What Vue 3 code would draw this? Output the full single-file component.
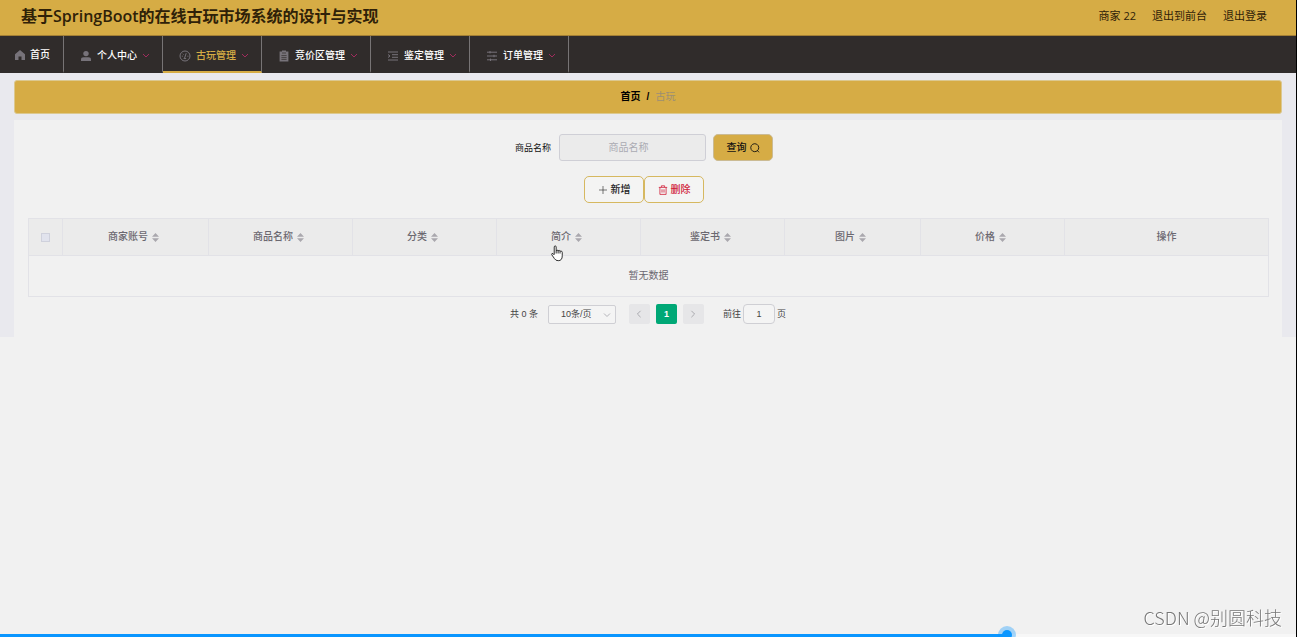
<script setup>
import { ref } from 'vue'

const menu = [
  { label: '首页', icon: 'home', children: false },
  { label: '个人中心', icon: 'user', children: true },
  { label: '古玩管理', icon: 'gauge', children: true, active: true },
  { label: '竞价区管理', icon: 'clipboard', children: true },
  { label: '鉴定管理', icon: 'list', children: true },
  { label: '订单管理', icon: 'sliders', children: true }
]

const columns = [
  { label: '商家账号', size: 'wide' },
  { label: '商品名称', size: 'normal' },
  { label: '分类', size: 'normal' },
  { label: '简介', size: 'normal', pointer: true },
  { label: '鉴定书', size: 'normal' },
  { label: '图片', size: 'narrow' },
  { label: '价格', size: 'normal' }
]

const keyword = ref('')
const pageSize = ref('10')
const jump = ref('1')
const progress = ref(779)
</script>

<template>
  <div class="page">
    <header class="topbar">
      <h1>基于SpringBoot的在线古玩市场系统的设计与实现</h1>
      <div class="account">
        <span>商家 22</span>
        <a href="#">退出到前台</a>
        <a href="#">退出登录</a>
      </div>
    </header>

    <nav class="menu">
      <a v-for="m in menu" :key="m.label" href="#" :class="{ active: m.active, root: !m.children }">
        <svg class="icon" viewBox="0 0 12 12" aria-hidden="true">
          <path v-if="m.icon === 'home'" fill="currentColor" d="M6 1 L11 5.2 V11 H7.5 V7.6 H4.5 V11 H1 V5.2 Z" />
          <g v-else-if="m.icon === 'user'" fill="currentColor">
            <circle cx="6" cy="3.6" r="2.7" />
            <path d="M1 11 V9.6 Q1 7.2 3.6 7.2 H8.4 Q11 7.2 11 9.6 V11 Z" />
          </g>
          <g v-else-if="m.icon === 'gauge'" fill="none" stroke="currentColor">
            <circle cx="6" cy="6" r="5" />
            <path d="M5.6 8 L7.2 3.2 M2.8 6.2 H3.8 M8.4 6.2 H9.4 M3.8 3.8 L4.5 4.5 M4.6 8.6 H7.2" />
          </g>
          <g v-else-if="m.icon === 'clipboard'">
            <path fill="currentColor" d="M1.6 1.6 H4 V.6 H8 V1.6 H10.4 V11.4 H1.6 Z" />
            <path class="cut" d="M4 3 H8 M3.4 5.6 H8.6 M3.4 7.6 H8.6 M3.4 9.4 H8.6" />
          </g>
          <path v-else-if="m.icon === 'list'" fill="none" stroke="currentColor" d="M1 2 H11 M5 4.7 H11 M5 7.3 H11 M1 10 H11 M1 4.5 L3 6 L1 7.5" />
          <path v-else fill="none" stroke="currentColor" d="M1 2.2 H11 M1 6 H11 M1 9.8 H11 M4 1 V3.4 M8 4.8 V7.2 M4.5 8.6 V11" />
        </svg>
        <span>{{ m.label }}</span>
        <svg v-if="m.children" class="arrow" viewBox="0 0 8 8" aria-hidden="true">
          <path fill="none" stroke="currentColor" d="M1 2 L4 5 L7 2" />
        </svg>
      </a>
    </nav>

    <main>
      <div class="crumbs">
        <a href="#">首页</a>
        <span class="slash">/</span>
        <span class="here">古玩</span>
      </div>

      <section class="card">
        <form class="search" @submit.prevent>
          <label for="goods">商品名称</label>
          <input id="goods" v-model="keyword" type="text" placeholder="商品名称">
          <button type="submit" class="query">
            查询
            <svg viewBox="0 0 10 10" aria-hidden="true">
              <path fill="none" stroke="currentColor" stroke-width=".9" d="M4.7 8.7 A4 4 0 1 1 4.8 8.7 Z M7.4 7.6 L9 9.3" />
            </svg>
          </button>
        </form>

        <div class="actions">
          <button type="button">
            <svg viewBox="0 0 10 10" aria-hidden="true"><path fill="none" stroke="currentColor" stroke-width=".6" d="M5 1 V9 M1 5 H9" /></svg>
            新增
          </button>
          <button type="button" class="danger">
            <svg viewBox="0 0 10 10" aria-hidden="true"><path fill="none" stroke="currentColor" stroke-width=".8" d="M.8 2.4 H9.2 M3.4 2.2 V.8 H6.6 V2.2 M1.9 2.4 V9.4 H8.1 V2.4 M4 4.3 V7.6 M6 4.3 V7.6" /></svg>
            删除
          </button>
        </div>

        <table>
          <colgroup>
            <col class="check">
            <col v-for="c in columns" :key="c.label" :class="c.size">
            <col class="last">
          </colgroup>
          <thead>
            <tr>
              <th><input type="checkbox" aria-label="全选"></th>
              <th v-for="c in columns" :key="c.label">
                <span class="sortable">
                  {{ c.label }}
                  <svg viewBox="0 0 7 9" aria-hidden="true"><path fill="currentColor" d="M3.5 0 L7 3.7 H0 Z M0 5.3 H7 L3.5 9 Z" /></svg>
                </span>
                <svg v-if="c.pointer" class="hand" viewBox="0 0 13 18" aria-hidden="true">
                  <path fill="#fff" stroke="#222" stroke-linejoin="round" d="M3.5 10 V2 Q3.5 .8 4.6 .8 Q5.6 .8 5.6 2 V6 Q6.6 4.7 7.7 6 Q8.9 5 9.8 6.4 Q11.8 5.7 12.2 7.7 V11.5 Q12.2 16.8 7.8 16.8 Q5 16.8 3.7 14.5 L.8 10.3 Q.6 8.6 2.1 9 L3.5 10.6 M5.6 6 V9 M7.7 6 V9 M9.8 6.4 V9" />
                </svg>
              </th>
              <th>操作</th>
            </tr>
          </thead>
          <tbody>
            <tr><td colspan="9">暂无数据</td></tr>
          </tbody>
        </table>

        <div class="pager">
          <span>共 0 条</span>
          <div class="size">
            <select v-model="pageSize" aria-label="每页条数">
              <option value="10">10条/页</option>
              <option value="20">20条/页</option>
            </select>
            <svg viewBox="0 0 8 8" aria-hidden="true"><path fill="none" stroke="currentColor" d="M1 2.5 L4 5.5 L7 2.5" /></svg>
          </div>
          <div class="pages">
            <button type="button" aria-label="上一页" disabled>
              <svg viewBox="0 0 8 8" aria-hidden="true"><path fill="none" stroke="currentColor" d="M5.6 .8 L2.4 4 L5.6 7.2" /></svg>
            </button>
            <button type="button" class="current">1</button>
            <button type="button" aria-label="下一页" disabled>
              <svg viewBox="0 0 8 8" aria-hidden="true"><path fill="none" stroke="currentColor" d="M2.4 .8 L5.6 4 L2.4 7.2" /></svg>
            </button>
          </div>
          <label class="jump">前往 <input v-model="jump" type="text"> 页</label>
        </div>
      </section>
    </main>

    <div class="watermark">CSDN @别圆科技</div>
    <input
      v-model="progress"
      class="seek"
      type="range"
      min="0"
      max="1000"
      aria-label="播放进度"
      :style="{ '--played': progress / 10 + '%' }"
    >
  </div>
</template>

<style>
body {
  margin: 0;
  background: #f1f1f1;
}
</style>

<style scoped>
* {
  box-sizing: border-box;
}

.page {
  min-height: 100vh;
  border-right: 1px solid #000;
  background: #f1f1f1;
  color: #222;
  font: 10px/14px "Liberation Sans", "Noto Sans CJK SC", sans-serif;
}

a {
  color: inherit;
  text-decoration: none;
}

button,
input,
select {
  margin: 0;
  font: inherit;
  color: inherit;
}

.topbar {
  display: flex;
  align-items: center;
  justify-content: space-between;
  height: 36px;
  padding: 0 29px 4px 21px;
  border-bottom: 1px solid #a37f35;
  background: #d6ac45;
}

h1 {
  margin: 0;
  color: #2f2108;
  font: 600 16px/24px "Open Sans", "Noto Sans CJK SC", sans-serif;
}

.account {
  display: flex;
  gap: 16px;
  color: #2f2108;
  font: 11px/16px "Open Sans", "Noto Sans CJK SC", sans-serif;
}

.menu {
  display: flex;
  height: 37px;
  background: #302c2b;
  color: #fff;
}

.menu a {
  display: flex;
  align-items: center;
  padding: 4px 12px 0 16px;
  border-right: 1px solid #777475;
  border-bottom: 2px solid transparent;
  font-weight: 500;
}

.menu a.root {
  padding: 2px 13px 0 14px;
}

.menu a.active {
  border-bottom-color: #d6ac45;
  color: #d6ac45;
}

.menu .icon {
  width: 12px;
  height: 12px;
  margin-right: 5px;
  color: #77737a;
}

.menu .root .icon {
  margin-right: 4px;
}

.menu .cut {
  fill: none;
  stroke: #302c2b;
  stroke-width: .7;
}

.menu .arrow {
  width: 8px;
  height: 8px;
  margin-left: 5px;
  color: #a02c5c;
}

main {
  padding: 7px 14px 0;
  background: #e9e9ee;
}

.crumbs {
  display: flex;
  align-items: center;
  justify-content: center;
  height: 34px;
  border: 1px solid #dcc88f;
  border-radius: 3px;
  background: #d6ac45;
  color: #000;
  font-weight: 700;
}

.slash {
  margin: 0 6px;
}

.here {
  color: #9c8f74;
  font-weight: 400;
}

.card {
  margin-top: 6px;
  padding: 14px 14px 13px;
  background: #f1f1f1;
}

.search,
.actions {
  display: flex;
  align-items: center;
  justify-content: center;
  padding-right: 8px;
}

.search label {
  margin-right: 8px;
  color: #111;
  font-size: 9px;
}

.search input {
  width: 147px;
  height: 27px;
  margin-right: 7px;
  padding: 0 18px 0 10px;
  border: 1px solid #cfcfd6;
  border-radius: 3px;
  background: #ebebeb;
  text-align: center;
}

.search input::placeholder {
  color: #aaaab2;
}

.search button,
.actions button {
  display: flex;
  align-items: center;
  justify-content: center;
  gap: 3px;
  width: 60px;
  height: 27px;
  padding: 0;
  border: 1px solid #d6b860;
  border-radius: 5px;
  background: #f4f4f3;
  color: #222;
  font-weight: 500;
}

.search .query {
  border-color: #cbbb94;
  background: #d6ac45;
  color: #111;
}

.search svg,
.actions svg {
  width: 10px;
  height: 10px;
}

.actions {
  margin: 15px 0;
}

.actions .danger {
  color: #d02038;
}

table {
  width: 100%;
  border-collapse: collapse;
  table-layout: fixed;
}

.check {
  width: 34px;
}

.wide {
  width: 146px;
}

.normal {
  width: 144px;
}

.narrow {
  width: 136px;
}

.last {
  width: 204px;
}

th,
td {
  position: relative;
  height: 37px;
  padding: 0;
  border: 1px solid #e2e2e7;
  text-align: center;
}

th {
  background: #ebebeb;
  color: #6b6870;
  font-weight: 500;
}

td {
  height: 41px;
  color: #6b6870;
}

.sortable {
  display: flex;
  align-items: center;
  justify-content: center;
  gap: 4px;
  padding-right: 4px;
}

.sortable svg {
  width: 7px;
  height: 9px;
  color: #aaa8ae;
}

.hand {
  position: absolute;
  z-index: 1;
  top: 26px;
  left: 54px;
  width: 12px;
  height: 17px;
}

th input {
  display: block;
  width: 9px;
  height: 9px;
  margin: 0 auto;
  appearance: none;
  border: 1px solid #cfd1dc;
  background: #e1e3ed;
}

.pager {
  display: flex;
  align-items: center;
  justify-content: center;
  margin-top: 7px;
  color: #444;
  font-size: 9px;
}

.size {
  position: relative;
  margin: 0 13px 0 10px;
}

.size select {
  display: block;
  width: 68px;
  height: 19px;
  padding: 0 12px 0 12px;
  appearance: none;
  border: 1px solid #cfcfd4;
  border-radius: 2px;
  background: #f4f4f4;
}

.size svg {
  position: absolute;
  top: 6px;
  right: 5px;
  width: 8px;
  height: 8px;
  color: #b4b4ba;
  pointer-events: none;
}

.pages {
  display: flex;
  gap: 6px;
}

.pages button {
  display: flex;
  align-items: center;
  justify-content: center;
  width: 21px;
  height: 20px;
  padding: 0;
  border: 0;
  border-radius: 2px;
  background: #e6e6e8;
  color: #a9a9ae;
}

.pages .current {
  background: #00a876;
  color: #fff;
  font-weight: 700;
}

.pages svg {
  width: 8px;
  height: 8px;
}

.jump {
  display: flex;
  align-items: center;
  gap: 2px;
  margin-left: 19px;
}

.jump input {
  width: 32px;
  height: 20px;
  padding: 0;
  border: 1px solid #cfcfd4;
  border-radius: 4px;
  background: #f4f4f4;
  text-align: center;
}

.watermark {
  position: fixed;
  right: 15px;
  bottom: 8px;
  color: #777;
  font: 300 18px/24px "Noto Sans CJK SC", sans-serif;
  text-shadow: 1px 1px 0 #fff;
}

.seek {
  position: fixed;
  right: 1px;
  bottom: -7px;
  left: 0;
  width: calc(100% - 1px);
  height: 18px;
  appearance: none;
  background: transparent;
}

.seek::-webkit-slider-runnable-track {
  height: 3px;
  background: linear-gradient(to right, #0a96ff var(--played), #f7f7f7 var(--played));
}

.seek::-webkit-slider-thumb {
  width: 10px;
  height: 10px;
  margin-top: -4px;
  appearance: none;
  border-radius: 50%;
  background: #0a96ff;
  box-shadow: 0 0 0 4px rgba(10, 150, 255, .35);
}
</style>
